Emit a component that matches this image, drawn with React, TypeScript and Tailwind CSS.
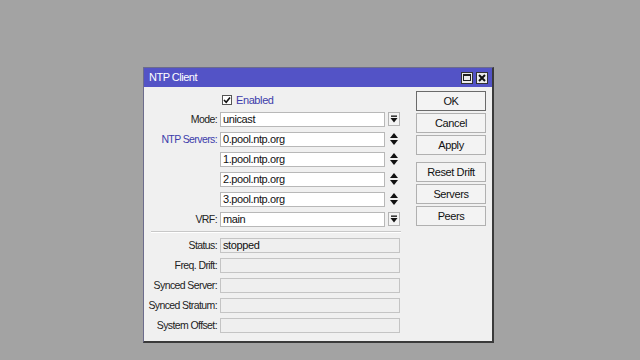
import React from "react";

const font = { fontFamily: '"Liberation Sans", Arial, sans-serif' };

function UpDown() {
  return (
    <svg width="12" height="14" viewBox="0 0 12 14" className="shrink-0">
      <path d="M6 1 L10 6 L2 6 Z" fill="#111" />
      <path d="M6 13 L10 8 L2 8 Z" fill="#111" />
    </svg>
  );
}

function DropBtn() {
  return (
    <div className="w-[12px] h-[14px] border border-[#b4b4b4] bg-[#f4f4f4] flex items-center justify-center shrink-0">
      <svg width="8" height="8" viewBox="0 0 8 8">
        <rect x="1" y="0.5" width="6" height="1.3" fill="#111" />
        <path d="M0.5 3 L7.5 3 L4 7.5 Z" fill="#111" />
      </svg>
    </div>
  );
}

function Row({
  label,
  value,
  blue,
  after,
  wide,
  readonly,
}: {
  label?: string;
  value?: string;
  blue?: boolean;
  after?: React.ReactNode;
  wide?: boolean;
  readonly?: boolean;
}) {
  return (
    <div className="flex items-center h-[14px]">
      <div
        className={`w-[72px] flex justify-end pr-[3px] text-[10.5px] leading-none whitespace-nowrap tracking-[-0.6px] ${
          blue ? "text-[#3c3caa]" : "text-[#222]"
        }`}
      >
        <span>{label}</span>
      </div>
      <div
        className={`${wide ? "w-[180px]" : "w-[165px]"} h-[15px] border ${
          readonly ? "border-[#c4c4c4] bg-[#efefef]" : "border-[#b8b8b8] bg-white"
        } text-[11px] leading-[13px] pl-[2px] text-[#111] whitespace-nowrap tracking-[-0.4px]`}
      >
        {value}
      </div>
      {after ? <div className="ml-[3px] flex items-center">{after}</div> : null}
    </div>
  );
}

function Btn({ children, primary }: { children: React.ReactNode; primary?: boolean }) {
  return (
    <div
      className={`w-[70px] h-[20px] flex items-center justify-center text-[11px] tracking-[-0.4px] text-[#111] bg-[#f3f3f3] border ${
        primary ? "border-[#6a6a6a]" : "border-[#b0b0b0]"
      }`}
    >
      {children}
    </div>
  );
}

export default function App() {
  return (
    <div className="w-[640px] h-[360px] bg-[#a3a3a3] overflow-hidden" style={font}>
      <div className="pt-[67px] pl-[143px]">
        <div className="w-[351px] h-[276px] bg-[#f0f0f0] border border-[#6c6c8c] border-r-[2px] border-b-[2px] border-r-[#3a3a3a] border-b-[#3a3a3a] flex flex-col">
          {/* title bar */}
          <div className="h-[19px] bg-[#5353c6] flex items-center justify-between pl-[5px] pr-[4px] shrink-0">
            <span className="text-white text-[11px] leading-none tracking-[-0.5px]">NTP Client</span>
            <div className="flex gap-[3px]">
              <div className="w-[12px] h-[12px] bg-[#ececec] border border-[#333] flex items-center justify-center">
                <div className="w-[8px] h-[7px] border border-[#222] border-t-[2px]" />
              </div>
              <div className="w-[12px] h-[12px] bg-[#ececec] border border-[#333] flex items-center justify-center">
                <svg width="8" height="8" viewBox="0 0 8 8">
                  <path d="M1 1 L7 7 M7 1 L1 7" stroke="#111" strokeWidth="2" />
                </svg>
              </div>
            </div>
          </div>
          {/* body */}
          <div className="flex flex-1">
            <div className="pl-[4px] pt-[6px] flex flex-col">
              <div className="flex items-center h-[14px] pl-[74px] gap-[4px]">
                <div className="w-[10px] h-[10px] bg-white border border-[#555] flex items-center justify-center">
                  <svg width="8" height="8" viewBox="0 0 8 8">
                    <path d="M1 4 L3.2 6.3 L7 1.5" stroke="#111" strokeWidth="1.6" fill="none" />
                  </svg>
                </div>
                <span className="text-[11px] leading-none text-[#3c3caa] tracking-[-0.4px]">Enabled</span>
              </div>
              <div className="flex flex-col gap-[6px] mt-[5px]">
                <Row label="Mode:" value="unicast" after={<DropBtn />} />
                <Row label="NTP Servers:" value="0.pool.ntp.org" blue after={<UpDown />} />
                <Row value="1.pool.ntp.org" after={<UpDown />} />
                <Row value="2.pool.ntp.org" after={<UpDown />} />
                <Row value="3.pool.ntp.org" after={<UpDown />} />
                <Row label="VRF:" value="main" after={<DropBtn />} />
              </div>
              <div className="ml-[3px] mt-[5px] w-[250px] h-[2px] border-t border-[#c8c8c8] border-b border-b-white" />
              <div className="flex flex-col gap-[6px] mt-[5px]">
                <Row label="Status:" value="stopped" wide readonly />
                <Row label="Freq. Drift:" wide readonly />
                <Row label="Synced Server:" wide readonly />
                <Row label="Synced Stratum:" wide readonly />
                <Row label="System Offset:" wide readonly />
              </div>
            </div>
            <div className="ml-[15px] pt-[4px] flex flex-col">
              <div className="flex flex-col gap-[2px]">
                <Btn primary>OK</Btn>
                <Btn>Cancel</Btn>
                <Btn>Apply</Btn>
              </div>
              <div className="flex flex-col gap-[2px] mt-[7px]">
                <Btn>Reset Drift</Btn>
                <Btn>Servers</Btn>
                <Btn>Peers</Btn>
              </div>
            </div>
          </div>
        </div>
      </div>
    </div>
  );
}
